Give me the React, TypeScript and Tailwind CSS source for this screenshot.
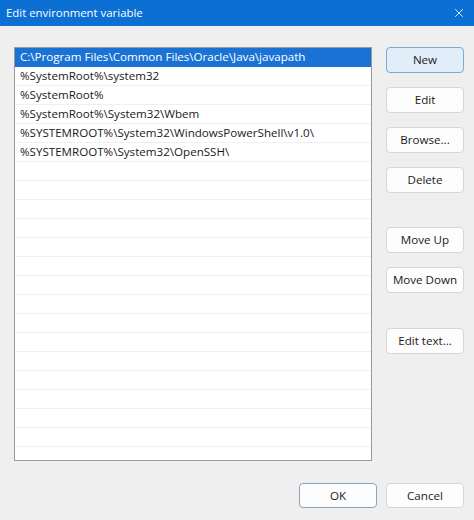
import { X } from "lucide-react"

const PATHS = [
  "C:\\Program Files\\Common Files\\Oracle\\Java\\javapath",
  "%SystemRoot%\\system32",
  "%SystemRoot%",
  "%SystemRoot%\\System32\\Wbem",
  "%SYSTEMROOT%\\System32\\WindowsPowerShell\\v1.0\\",
  "%SYSTEMROOT%\\System32\\OpenSSH\\",
]

const ROWS = 22

function SideButton({ label, primary }: { label: string; primary?: boolean }) {
  return (
    <button
      className={`h-[26px] w-[78px] rounded-[4px] border text-[11.6px] text-[#1a1a1a] ${
        primary ? "border-[#7fa9d1] bg-[#e1eef9]" : "border-[#d6d6d6] bg-[#fdfdfd]"
      }`}
    >
      {label}
    </button>
  )
}

export default function App() {
  return (
    <div className="flex h-[520px] w-[474px] flex-col bg-[#efefef] font-['Open_Sans',sans-serif]">
      <div className="flex h-[26px] items-center justify-between bg-[#0b6fd3] pl-[6px] pr-[8px] text-white">
        <span className="text-[11.4px]">Edit environment variable</span>
        <X className="h-[14px] w-[14px]" strokeWidth={1.5} />
      </div>

      <div className="flex gap-[14px] pl-[14px] pt-[21px]">
        <div className="h-[414px] w-[358px] overflow-hidden border border-[#9a9a9a] bg-white">
          {Array.from({ length: ROWS }).map((_, i) => (
            <div
              key={i}
              className={`flex h-[19px] items-center border-b px-[5px] text-[11.6px] leading-none whitespace-nowrap ${
                i === 0 ? "border-[#1a73d4] bg-[#1a73d4] text-white" : "border-[#f0f0f0] text-[#1a1a1a]"
              }`}
            >
              {PATHS[i] ?? ""}
            </div>
          ))}
        </div>

        <div className="flex flex-col">
          <div className="flex flex-col gap-[14px]">
            <SideButton label="New" primary />
            <SideButton label="Edit" />
            <SideButton label="Browse..." />
            <SideButton label="Delete" />
          </div>
          <div className="mt-[34px] flex flex-col gap-[14px]">
            <SideButton label="Move Up" />
            <SideButton label="Move Down" />
          </div>
          <div className="mt-[34px]">
            <SideButton label="Edit text..." />
          </div>
        </div>
      </div>

      <div className="flex justify-end gap-[9px] pr-[10px] pt-[22px]">
        <button className="h-[25px] w-[78px] rounded-[4px] border border-[#8aa3b8] bg-[#fdfdfd] text-[11.6px] text-[#1a1a1a]">
          OK
        </button>
        <button className="h-[25px] w-[78px] rounded-[4px] border border-[#d6d6d6] bg-[#fdfdfd] text-[11.6px] text-[#1a1a1a]">
          Cancel
        </button>
      </div>
    </div>
  )
}
